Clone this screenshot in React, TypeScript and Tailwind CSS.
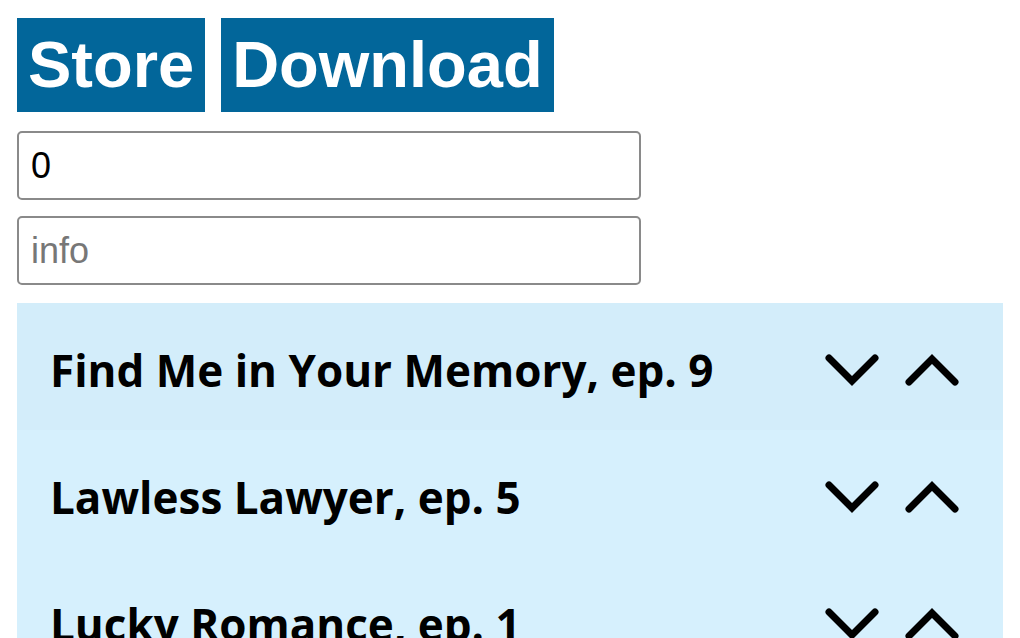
import { useState } from "react";

const shows = [
    "Find Me in Your Memory, ep. 9",
    "Lawless Lawyer, ep. 5",
    "Lucky Romance, ep. 1",
    "Prison Playbook, ep. 3",
];

function Chevron({ up }: { up?: boolean }) {
    return (
        <svg width="54" height="36" viewBox="0 0 54 36" fill="none" stroke="#000" strokeWidth="7" strokeLinecap="round" strokeLinejoin="miter">
            {up ? <polyline points="4,30 27,7 50,30" /> : <polyline points="4,6 27,29 50,6" />}
        </svg>
    );
}

export default function App() {
    const [count, setCount] = useState("0");

    return (
        <div className="pt-[18px] px-[17px] bg-white min-h-screen font-['Liberation_Sans',Arial,sans-serif]">
            <div className="flex gap-4">
                <button className="bg-[#02669a] text-white font-bold text-[65px] leading-[74px] px-[11px] py-[10px]">
                    Store
                </button>
                <button className="bg-[#02669a] text-white font-bold text-[65px] leading-[74px] px-[11px] py-[10px]">
                    Download
                </button>
            </div>

            <div className="mt-[19px] flex flex-col gap-4">
                <input
                    value={count}
                    onChange={(e) => setCount(e.target.value)}
                    className="w-[624px] h-[69px] border-2 border-[#8a8a8a] rounded-[5px] px-3 text-[36px] text-black outline-none"
                />
                <input
                    placeholder="info"
                    className="w-[624px] h-[69px] border-2 border-[#8a8a8a] rounded-[5px] px-3 text-[36px] text-black placeholder:text-[#777] outline-none"
                />
            </div>

            <ul className="mt-[18px] bg-[#d6f0fd]">
                {shows.map((s, i) => (
                    <li
                        key={s}
                        className={`flex items-center justify-between h-[127px] pt-[6px] pl-[33px] pr-[44px] ${i === 0 ? "bg-[#d3edfa]" : ""}`}
                    >
                        <span className="font-['Open_Sans',sans-serif] font-bold text-[44px] leading-none text-black">{s}</span>
                        <span className="flex items-center gap-[26px]">
                            <Chevron />
                            <Chevron up />
                        </span>
                    </li>
                ))}
            </ul>
        </div>
    );
}
